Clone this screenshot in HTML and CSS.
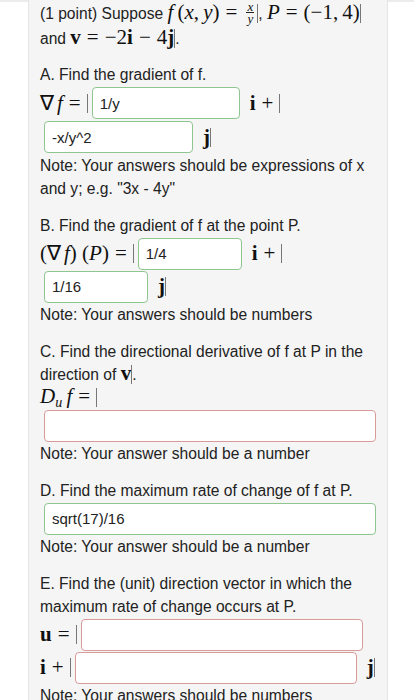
FILE: index.html
```html
<!DOCTYPE html>
<html lang="en">
<head>
    <meta charset="UTF-8">
    <meta name="viewport" content="width=device-width, initial-scale=1">
    <title>Gradient problem</title>
    <link rel="stylesheet" href="styles.css">
</head>
<body>
    <div class="top-strip"></div>

    <div class="problem">
        <!-- Opgavetekst -->
        <div class="intro">
            <div class="line">(1 point) Suppose <span class="m"><i>f</i>&thinsp;(<i>x</i>,&thinsp;<i>y</i>)<span class="op">=</span><span class="frac"><span class="num"><i>x</i></span><span class="den"><i>y</i></span></span></span><span class="bar"></span>, <span class="m"><i>P</i><span class="op">=</span>(&minus;1,&thinsp;4)</span><span class="bar"></span></div>
            <div class="line">and <span class="m"><b>v</b><span class="op">=</span>&minus;2<b>i</b><span class="op">&minus;</span>4<b>j</b></span><span class="bar"></span>.</div>
        </div>

        <!-- A -->
        <div class="section first">
            <div class="line">A. Find the gradient of f.</div>
            <div class="row big">
                <span class="m"><span class="nabla">&nabla;</span><i>f</i><span class="op">=</span></span><span class="bar"></span>
                <input class="answer correct w148" type="text" value="1/y">
                <span class="m after"><b>i</b><span class="op">+</span></span><span class="bar"></span>
            </div>
            <div class="row big">
                <input class="answer correct w149" type="text" value="-x/y^2">
                <span class="m after"><b>j</b></span><span class="bar"></span>
            </div>
            <div class="line">Note: Your answers should be expressions of x</div>
            <div class="line">and y; e.g. "3x - 4y"</div>
        </div>

        <!-- B -->
        <div class="section">
            <div class="line">B. Find the gradient of f at the point P.</div>
            <div class="row">
                <span class="m">(<span class="nabla">&nabla;</span><i>f</i>)&nbsp;(<i>P</i>)<span class="op">=</span></span><span class="bar"></span>
                <input class="answer correct w104" type="text" value="1/4">
                <span class="m after"><b>i</b><span class="op">+</span></span><span class="bar"></span>
            </div>
            <div class="row">
                <input class="answer correct w104" type="text" value="1/16">
                <span class="m after"><b>j</b></span><span class="bar"></span>
            </div>
            <div class="line">Note: Your answers should be numbers</div>
        </div>

        <!-- C -->
        <div class="section">
            <div class="line">C. Find the directional derivative of f at P in the</div>
            <div class="line">direction of <span class="m"><b>v</b></span><span class="bar"></span>.</div>
            <div class="line"><span class="m"><i>D<sub>u</sub></i>&thinsp;<i>f</i><span class="op">=</span></span><span class="bar"></span></div>
            <div class="row">
                <input class="answer wrong full" type="text" value="">
            </div>
            <div class="line">Note: Your answer should be a number</div>
        </div>

        <!-- D -->
        <div class="section">
            <div class="line">D. Find the maximum rate of change of f at P.</div>
            <div class="row">
                <input class="answer correct full" type="text" value="sqrt(17)/16">
            </div>
            <div class="line">Note: Your answer should be a number</div>
        </div>

        <!-- E -->
        <div class="section">
            <div class="line">E. Find the (unit) direction vector in which the</div>
            <div class="line">maximum rate of change occurs at P.</div>
            <div class="row">
                <span class="m"><b>u</b><span class="op">=</span></span><span class="bar"></span>
                <input class="answer wrong w282" type="text" value="">
            </div>
            <div class="row">
                <span class="m"><b>i</b><span class="op">+</span></span><span class="bar"></span>
                <input class="answer wrong w282" type="text" value="">
                <span class="m after"><b>j</b></span><span class="bar"></span>
            </div>
            <div class="line">Note: Your answers should be numbers</div>
        </div>
    </div>
</body>
</html>
```

FILE: styles.css
```css
/* Side og baggrund */
body {
    margin: 0;
    padding: 0;
    background: #ffffff;
    font-family: 'Liberation Sans', Arial, sans-serif;
    font-size: 15.6px;
    color: #222;
    overflow: hidden;
}

.top-strip {
    height: 2px;
    background: #ececec;
}

/* Opgaveboks */
.problem {
    margin-left: 28px;
    width: 336px;
    padding: 0 11px 40px 11px;
    background: #f5f5f5;
    border-left: 1px solid #e6e6e6;
    border-right: 1px solid #e6e6e6;
    margin-top: -2px;
}

.intro {
    padding-top: 1px;
}

.intro .line {
    height: 25px;
    line-height: 25px;
}

.section {
    margin-top: 14px;
}

.section.first {
    margin-top: 12px;
}

.line {
    height: 23px;
    line-height: 23px;
    white-space: nowrap;
}

.row {
    display: flex;
    align-items: center;
    height: 33px;
}

.row.big {
    height: 34px;
}

/* Matematik */
.m {
    font-family: 'Liberation Serif', 'Times New Roman', serif;
    font-size: 21px;
    line-height: 1;
    color: #111;
}

.m i {
    font-style: italic;
}

.m b {
    font-weight: bold;
}

.m sub {
    font-size: 14px;
    vertical-align: -4px;
    line-height: 0;
}

.nabla {
    margin-right: 3px;
}

.op {
    margin: 0 6px;
}

.frac {
    display: inline-flex;
    flex-direction: column;
    vertical-align: middle;
    font-size: 13px;
    line-height: 11px;
    text-align: center;
    margin: 0 3px;
    position: relative;
    top: -2px;
}

.frac .num {
    border-bottom: 1px solid #222;
    padding: 0 1px;
}

.bar {
    display: inline-block;
    width: 1px;
    height: 19px;
    background: #777;
    vertical-align: -4px;
}

.after {
    margin-left: 10px;
}

/* Svarfelter */
.answer {
    box-sizing: border-box;
    height: 32px;
    margin-left: 4px;
    padding: 0 7px;
    border-radius: 4px;
    background: #ffffff;
    font-family: 'Liberation Sans', Arial, sans-serif;
    font-size: 15px;
    color: #222;
    outline: none;
}

.correct {
    border: 1px solid #8fc58f;
}

.wrong {
    border: 1px solid #d99a9a;
}

.w148 { width: 148px; }
.w149 { width: 149px; }
.w104 { width: 104px; }
.w282 { width: 282px; }
.full { width: 334px; }
```
